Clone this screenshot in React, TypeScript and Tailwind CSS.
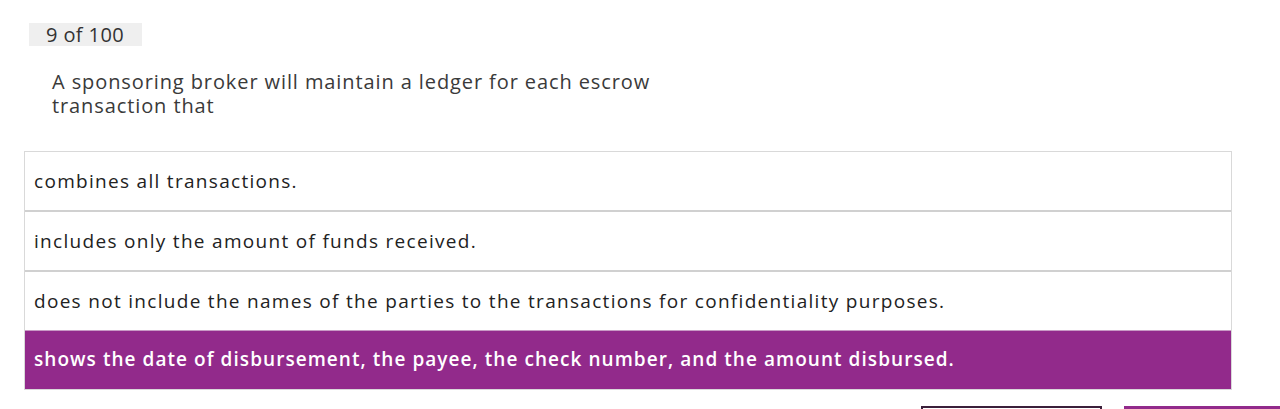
export default function App() {
  const options = [
    "combines all transactions.",
    "includes only the amount of funds received.",
    "does not include the names of the parties to the transactions for confidentiality purposes.",
    "shows the date of disbursement, the payee, the check number, and the amount disbursed.",
  ];
  const selected = 3;

  return (
    <div
      className="w-[1280px] h-[409px] overflow-hidden bg-white text-[#333]"
      style={{ fontFamily: '"Open Sans", "Liberation Sans", sans-serif' }}
    >
      <div className="pt-[23px] pl-[24px] w-[1400px]">
        <div className="ml-[5px] w-[113px] h-[23px] bg-[#efefef] flex items-center pl-[17px] text-[20px] leading-none text-[#333] tracking-[0.4px]">
          9 of 100
        </div>

        <p className="mt-[24px] ml-[28px] w-[640px] text-[20px] leading-[24px] text-[#3a3a3a] tracking-[0.9px]">
          A sponsoring broker will maintain a ledger for each escrow transaction that
        </p>

        <div className="mt-[33px] w-[1208px] border border-[#d9d9d9]">
          {options.map((text, i) =>
            i === selected ? (
              <div
                key={i}
                className="h-[59px] flex items-center pl-[9px] pb-[1px] bg-[#922a8b] border-t border-[#c89ac5] text-white font-semibold text-[19px] tracking-[1.05px]"
              >
                {text}
              </div>
            ) : (
              <div
                key={i}
                className={`flex items-center pl-[9px] text-[19px] text-[#222] tracking-[1.3px] ${
                  i > 0 ? "h-[60px] border-t-2 border-[#d0d0d0]" : "h-[58px]"
                }`}
              >
                {text}
              </div>
            )
          )}
        </div>

        <div className="mt-[16px] flex gap-[22px] pl-[897px]">
          <button className="w-[181px] h-[40px] border-2 border-[#3b1f3a] bg-white" />
          <button className="w-[181px] h-[40px] bg-[#922a8b]" />
        </div>
      </div>
    </div>
  );
}
